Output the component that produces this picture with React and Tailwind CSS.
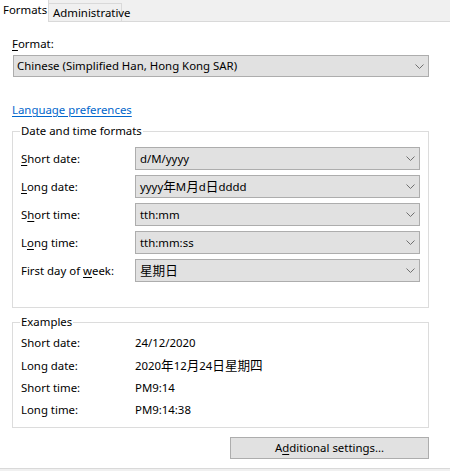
import React from 'react';

const font = { fontFamily: '"Noto Sans", "Noto Sans CJK SC", sans-serif' };

// CJK glyphs in the dialog render a bit larger than the Latin text
function Mixed({ text }) {
  const parts = text.split(/([\u4e00-\u9fff]+)/);
  return (
    <>
      {parts.map((p, i) =>
        /[\u4e00-\u9fff]/.test(p) ? (
          <span key={i} className="text-[12.6px] leading-[16px]" style={{ fontFamily: '"Noto Sans CJK SC", sans-serif' }}>
            {p}
          </span>
        ) : (
          <React.Fragment key={i}>{p}</React.Fragment>
        )
      )}
    </>
  );
}

function Chevron() {
  return (
    <svg width="9" height="5" viewBox="0 0 9 5" className="shrink-0">
      <path d="M0.5 0.5 L4.5 4.5 L8.5 0.5" fill="none" stroke="#707070" strokeWidth="1" />
    </svg>
  );
}

function Select({ children, className = '' }) {
  return (
    <div
      className={`flex items-center justify-between border border-[#adadad] bg-[#e1e1e1] pr-[4px] ${className}`}
    >
      <span className="whitespace-nowrap">{children}</span>
      <Chevron />
    </div>
  );
}

function Key({ children }) {
  return <span className="underline underline-offset-2">{children}</span>;
}

const formatRows = [
  { label: <><Key>S</Key>hort date:</>, value: 'd/M/yyyy' },
  { label: <><Key>L</Key>ong date:</>, value: 'yyyy年M月d日dddd' },
  { label: <>S<Key>h</Key>ort time:</>, value: 'tth:mm' },
  { label: <>L<Key>o</Key>ng time:</>, value: 'tth:mm:ss' },
  { label: <>First day of <Key>w</Key>eek:</>, value: '星期日' },
];

const examples = [
  ['Short date:', '24/12/2020'],
  ['Long date:', '2020年12月24日星期四'],
  ['Short time:', 'PM9:14'],
  ['Long time:', 'PM9:14:38'],
];

export default function App() {
  return (
    <div className="w-[450px] h-[471px] bg-[#f0f0f0] text-[11.4px] leading-[16px] text-black overflow-hidden" style={font}>
      {/* tabs */}
      <div className="flex h-[22px] items-start">
        <div className="h-[22px] bg-white border-r border-[#d9d9d9] w-[49px] pl-[3px] pt-[2px]">Formats</div>
        <div className="mt-[3px] h-[19px] w-[73px] border-t border-r border-b border-[#d9d9d9] bg-[#f0f0f0] pl-[4px] leading-[17px]">
          Administrative
        </div>
        <div className="flex-1 h-[22px] border-b border-[#d9d9d9]" />
      </div>

      {/* panel */}
      <div className="bg-white h-[447px] border-b border-[#d9d9d9] flex flex-col pt-[14px]">
        <div className="ml-[12px]">
          <Key>F</Key>ormat:
        </div>
        <Select className="mt-[3px] ml-[13px] w-[416px] h-[22px] pl-[3px]">
          Chinese (Simplified Han, Hong Kong SAR)
        </Select>

        <a className="mt-[25px] ml-[12px] self-start text-[#0066cc] underline underline-offset-2 cursor-pointer">
          Language preferences
        </a>

        <fieldset className="mt-[5px] ml-[12px] w-[417px] border border-[#dcdcdc] px-[8px] pb-[25px]">
          <legend className="-ml-[1px] px-[1px]">Date and time formats</legend>
          <div className="flex flex-col gap-[5px] mt-[8px]">
            {formatRows.map((r, i) => (
              <div key={i} className="flex items-center h-[23px]">
                <div className="w-[114px]">{r.label}</div>
                <Select className="flex-1 h-[23px] pl-[4px]">
                  <Mixed text={r.value} />
                </Select>
              </div>
            ))}
          </div>
        </fieldset>

        <fieldset className="mt-[6px] ml-[12px] w-[417px] border border-[#dcdcdc] px-[8px] pb-[5px]">
          <legend className="-ml-[1px] px-[1px]">Examples</legend>
          <div className="flex flex-col mt-[2px]">
            {examples.map(([k, v]) => (
              <div key={k} className="flex items-center h-[22.4px]">
                <div className="w-[114px]">{k}</div>
                <div className="whitespace-nowrap">
                  <Mixed text={v} />
                </div>
              </div>
            ))}
          </div>
        </fieldset>

        <button className="mt-[9px] ml-[230px] w-[199px] h-[22px] border border-[#adadad] bg-[#e1e1e1] text-center">
          A<Key>d</Key>ditional settings...
        </button>
      </div>
    </div>
  );
}
